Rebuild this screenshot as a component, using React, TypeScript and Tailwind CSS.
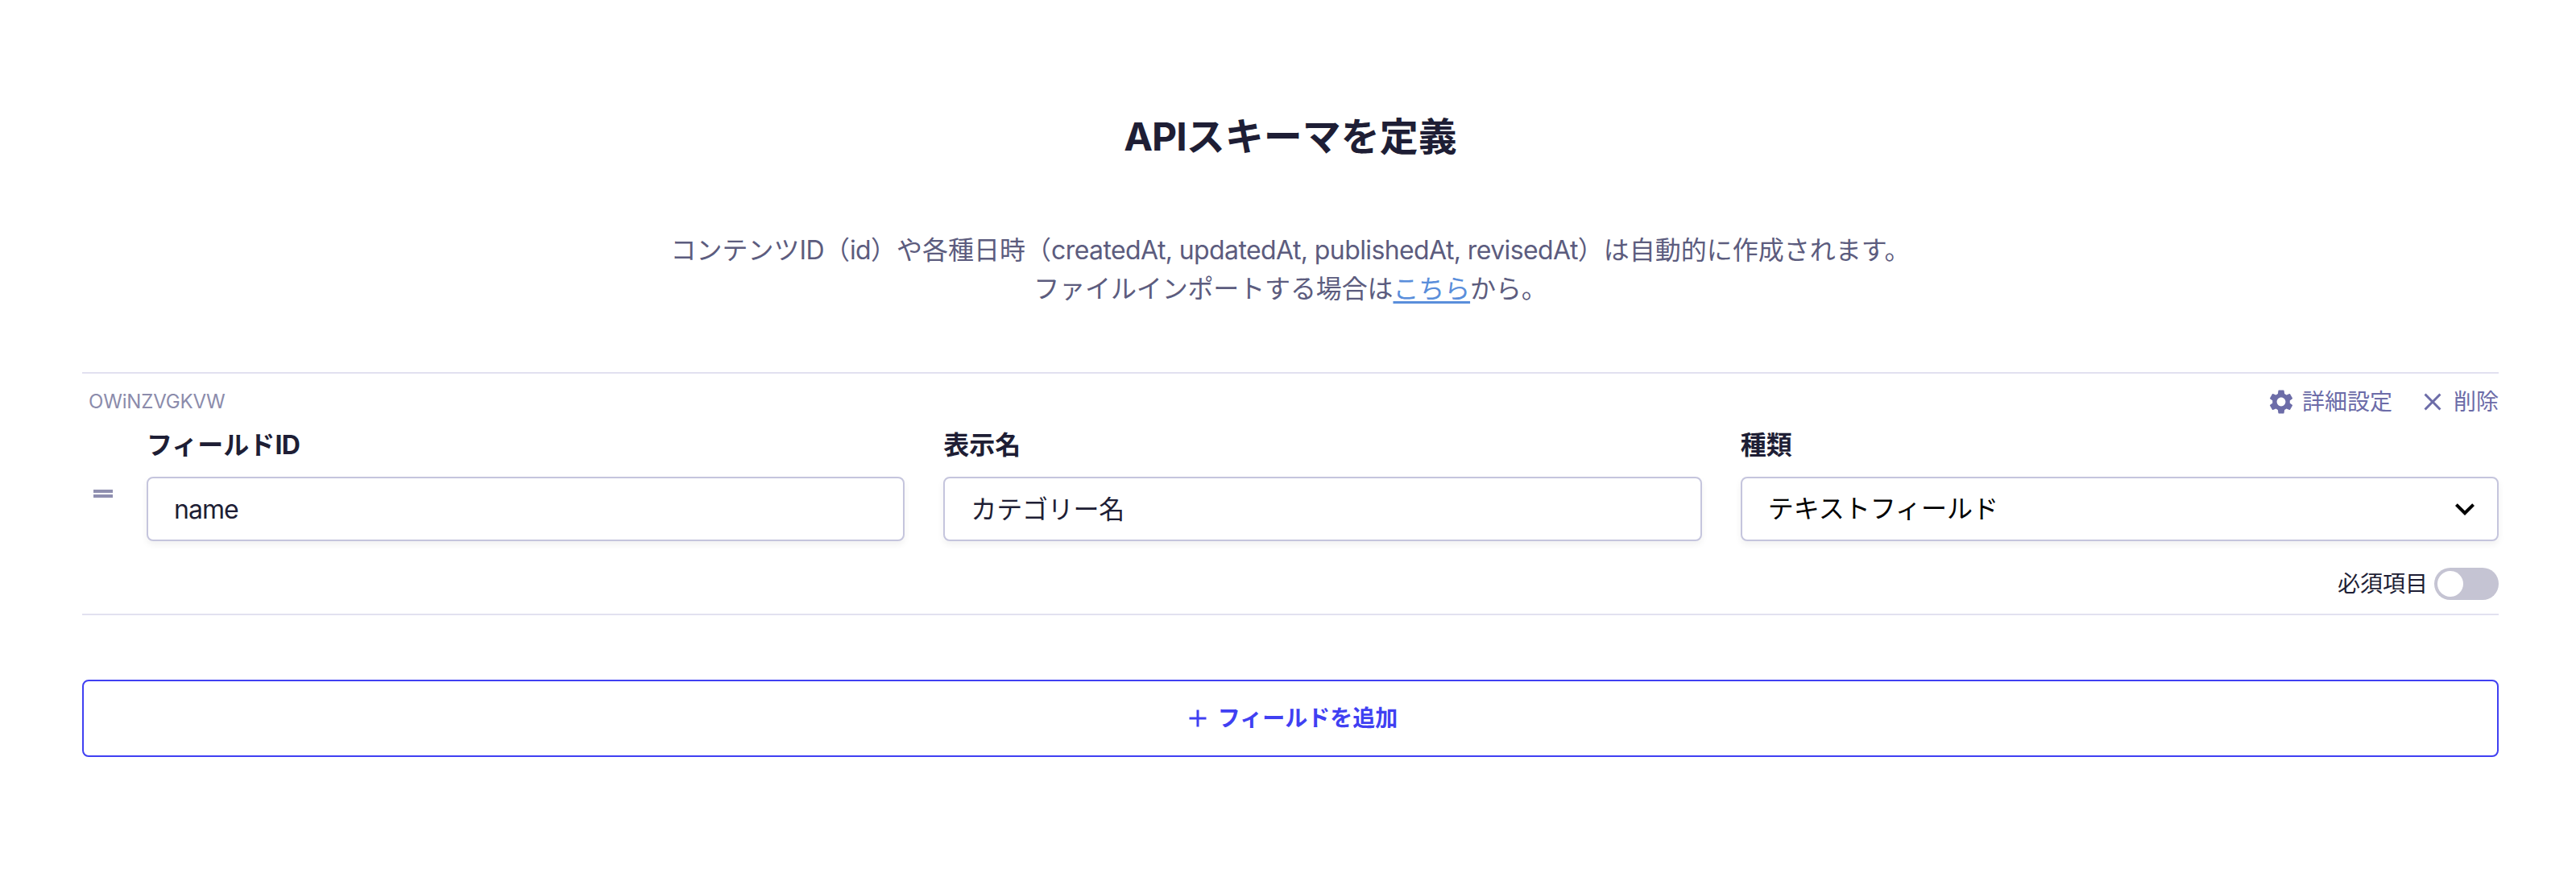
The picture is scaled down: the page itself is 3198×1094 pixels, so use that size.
import { useState } from 'react';
import type { ReactNode } from 'react';
import {
  MdAdd,
  MdClose,
  MdKeyboardArrowDown,
  MdSettings,
} from 'react-icons/md';

interface FieldColumnProps {
  label: ReactNode;
  children: ReactNode;
}

const boxClass =
  'h-20 w-full rounded-lg border-2 border-[#c5c5dd] bg-white px-8 text-[32px] shadow-[0_4px_8px_rgba(0,0,0,0.06)] outline-none';

function FieldColumn({ label, children }: FieldColumnProps) {
  return (
    <div className="min-w-0 flex-1">
      <div className="mb-[15px] h-12 text-[32px] leading-[48px] font-bold">
        {label}
      </div>
      {children}
    </div>
  );
}

function DragHandle() {
  return (
    <div className="flex w-6 cursor-grab flex-col gap-[2px]">
      <span className="h-1 bg-[#8f8fb0]" />
      <span className="h-1 bg-[#8f8fb0]" />
    </div>
  );
}

interface ToggleProps {
  checked: boolean;
  onChange: (checked: boolean) => void;
}

function Toggle({ checked, onChange }: ToggleProps) {
  return (
    <button
      type="button"
      role="switch"
      aria-checked={checked}
      onClick={() => onChange(!checked)}
      className={`flex h-10 w-20 items-center rounded-full p-1 ${
        checked ? 'justify-end bg-[#4040f2]' : 'justify-start bg-[#c5c4d3]'
      }`}
    >
      <span className="h-8 w-8 rounded-full bg-white" />
    </button>
  );
}

function Latin({ children }: { children: ReactNode }) {
  return <span className="tracking-[-0.6px]">{children}</span>;
}

function SchemaField() {
  const [fieldId, setFieldId] = useState('name');
  const [displayName, setDisplayName] = useState('カテゴリー名');
  const [required, setRequired] = useState(false);

  return (
    <div className="h-[302px] border-y-2 border-[#e2e1f0]">
      <div className="flex h-[53px] items-end justify-between pl-2">
        <span className="text-2xl leading-9 tracking-[-0.15px] text-[#8b8bab]">
          OWiNZVGKVW
        </span>
        <div className="flex gap-8 text-[28px] leading-9 text-[#6c6ca8]">
          <button type="button" className="flex items-center gap-2">
            <MdSettings className="h-9 w-9" />
            詳細設定
          </button>
          <button type="button" className="flex items-center gap-2">
            <MdClose className="h-9 w-9" />
            削除
          </button>
        </div>
      </div>

      <div className="mt-3 flex">
        <div className="flex w-20 shrink-0 pt-[79px] pl-[14px]">
          <DragHandle />
        </div>
        <div className="flex flex-1 gap-12">
          <FieldColumn
            label={
              <>
                フィールド<Latin>ID</Latin>
              </>
            }
          >
            <input
              className={`${boxClass} tracking-[-1px]`}
              value={fieldId}
              onChange={e => setFieldId(e.target.value)}
            />
          </FieldColumn>
          <FieldColumn label="表示名">
            <input
              className={`${boxClass} pb-1 tracking-[-0.2px]`}
              value={displayName}
              onChange={e => setDisplayName(e.target.value)}
            />
          </FieldColumn>
          <FieldColumn label="種類">
            <button
              type="button"
              className={`${boxClass} flex items-center justify-between pr-4 text-black`}
            >
              テキストフィールド
              <MdKeyboardArrowDown className="h-12 w-12" />
            </button>
          </FieldColumn>
        </div>
      </div>

      <div className="mt-[33px] flex items-center justify-end gap-2 text-[28px] leading-10">
        必須項目
        <Toggle checked={required} onChange={setRequired} />
      </div>
    </div>
  );
}

export default function App() {
  return (
    <main className="min-h-[1094px] bg-white pt-[134px] pr-24 pl-[102px] font-[Inter,'Noto_Sans_CJK_JP',sans-serif] text-[#1e1e35]">
      <h1 className="text-center text-[48px] leading-[72px] font-bold">
        <span className="tracking-[-1px]">API</span>スキーマを定義
      </h1>

      <p className="mt-[81px] text-center text-[32px] leading-[48px] text-[#5c5c7e]">
        コンテンツ<Latin>ID</Latin>（<Latin>id</Latin>）や各種日時（
        <Latin>createdAt, updatedAt, publishedAt, revisedAt</Latin>
        ）は自動的に作成されます。
        <br />
        <span className="tracking-[-0.13px]">
          ファイルインポートする場合は
          <a
            href="#import"
            className="text-[#5a8edb] underline decoration-[3px] underline-offset-4"
          >
            こちら
          </a>
          から。
        </span>
      </p>

      <div className="mt-[79px]">
        <SchemaField />
      </div>

      <button
        type="button"
        className="mt-20 flex h-24 w-full items-center justify-center gap-[7px] rounded-lg border-2 border-[#4040f2] text-[28px] font-bold text-[#4040f2]"
      >
        <MdAdd className="h-9 w-9" />
        フィールドを追加
      </button>
    </main>
  );
}
